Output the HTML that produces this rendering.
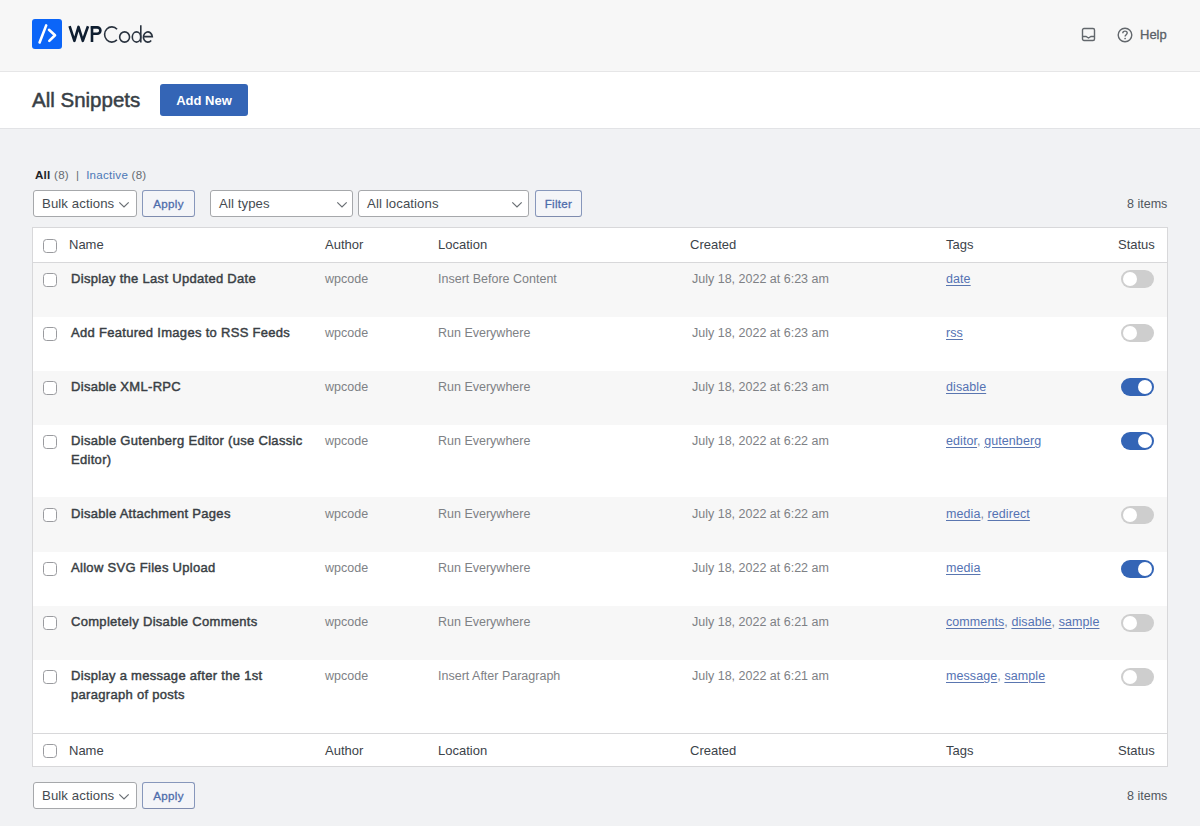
<!DOCTYPE html>
<html><head><meta charset="utf-8">
<style>
*{box-sizing:border-box;margin:0;padding:0}
html,body{width:1200px;height:826px;overflow:hidden}
body{background:#f1f2f4;font-family:"Liberation Sans",sans-serif;color:#3c434a;position:relative}
.abs{position:absolute}
#top{position:absolute;left:0;top:0;width:1200px;height:72px;background:#f7f7f7;border-bottom:1px solid #e6e6e7}
#band{position:absolute;left:0;top:72px;width:1200px;height:57px;background:#fff;border-bottom:1px solid #e2e3e6}
.logo{position:absolute;left:32px;top:19px;width:30px;height:30px;border-radius:3px;background:#0b65f8}
.wp{position:absolute;left:68px;top:21px;font-size:23px;line-height:26px;white-space:nowrap;color:#0f1f31}
.wp b{font-weight:700;display:inline-block;transform:scaleX(0.95);transform-origin:0 0;margin-right:-2px}
.wp span{color:#323c48;display:inline-block;transform:scaleX(0.89);transform-origin:0 0}
.help{position:absolute;left:1140px;top:27px;font-size:13px;line-height:16px;color:#5a6066;-webkit-text-stroke:0.3px #5a6066}
h1{position:absolute;left:32px;top:87px;font-size:20.5px;font-weight:400;line-height:26px;color:#383f46;white-space:nowrap;-webkit-text-stroke:0.5px #383f46}
.btnp{position:absolute;left:160px;top:84px;width:88px;height:32px;background:#3465b6;border-radius:3px;color:#fff;font-weight:700;font-size:13px;line-height:33px;text-align:center}
.sub{position:absolute;left:35px;top:168px;font-size:11.6px;letter-spacing:0.25px;line-height:14px;color:#666b71;white-space:nowrap}
.sub b{color:#1d2327}
.sub a{color:#4b77b6;text-decoration:none}
.sel{position:absolute;height:27px;background:#fff;border:1px solid #a6a8ab;border-radius:3px;font-size:13.2px;line-height:25px;padding-left:8px;color:#454b51;letter-spacing:0.1px;white-space:nowrap}
.sel svg{position:absolute;top:8px}
.btn2{position:absolute;height:27px;background:#f4f5f8;border:1px solid #8797bb;border-bottom-color:#7f8cae;border-radius:3px;font-size:11.6px;letter-spacing:0.3px;line-height:26px;text-align:center;color:#4d6cab;-webkit-text-stroke:0.3px #4d6cab}
.items{position:absolute;font-size:12.5px;line-height:14px;color:#50575e;white-space:nowrap}
#tbl{position:absolute;left:32px;top:227px;width:1136px;height:540px;background:#fff;border:1px solid #d8d8da}
.row{position:absolute;left:0;width:1134px}
.row.alt{background:#f7f7f7}
.cb{position:absolute;left:10px;width:14px;height:14px;border:1px solid #9a9b9f;border-radius:3.5px;background:#fff}
.th{position:absolute;font-size:13px;line-height:16px;color:#3c434a;white-space:nowrap}
.nm{position:absolute;left:38px;font-size:13px;font-weight:400;letter-spacing:0.3px;line-height:18.6px;color:#3a3f45;-webkit-text-stroke:0.45px #3a3f45;width:270px}
.td{position:absolute;font-size:12.5px;line-height:16px;color:#7e8185;white-space:nowrap}
.tg{position:absolute;left:913px;font-size:12.5px;letter-spacing:0.08px;line-height:16px;color:#7b86a0;white-space:nowrap}
.tg a{color:#5472b3;text-decoration:underline;text-underline-offset:1.5px;text-decoration-color:#5a76b0}
.tog{position:absolute;left:1088px;width:33px;height:18px;border-radius:9px;background:#cecece}
.tog::after{content:"";position:absolute;top:2px;left:2px;width:14px;height:14px;border-radius:50%;background:#fff}
.tog.on{background:#3465b6}
.tog.on::after{left:17px}
</style></head><body>
<div id="top">
  <div class="logo">
    <svg width="30" height="30" viewBox="0 0 30 30"><path d="M7.6 23.5 L14.2 6.4" stroke="#fff" stroke-width="2.6" stroke-linecap="round" fill="none"/><path d="M17 10.8 L23 16.3 L17.3 21.9" stroke="#fff" stroke-width="2.6" stroke-linecap="round" stroke-linejoin="round" fill="none"/></svg>
  </div>
  <svg class="abs" style="left:0;top:0" width="170" height="60" viewBox="0 0 170 60"><g fill="none" stroke="#0f1e30" stroke-width="2.6" stroke-linejoin="round"><path d="M69.6 26.2 L74.4 40.8 L78.5 26.9 L82.8 40.8 L88 26.2"/><path d="M92 26.2 V42"/><path d="M90.85 27.35 H97.2 A3.2 3.2 0 0 1 97.2 33.75 H92"/></g><g fill="none" stroke="#2a333f" stroke-width="1.6"><path d="M117.06 29.32 A7.2 7.6 0 1 0 116.9 39.87"/><ellipse cx="124.6" cy="37" rx="4.95" ry="5.1"/><ellipse cx="136.5" cy="37" rx="4.2" ry="5.1"/><path d="M140.8 25.3 V42.6"/><path d="M143.45 36.6 H152.3 A4.45 5.1 0 1 0 151.2 40.4"/></g></svg>
  <svg class="abs" style="left:1081px;top:27px" width="16" height="16" viewBox="0 0 16 16"><rect x="1.5" y="1.5" width="12" height="12" rx="1.5" fill="none" stroke="#62676c" stroke-width="1.4"/><path d="M1.5 9.5 H5 L7.5 11 L10 9.5 H13.5" fill="none" stroke="#62676c" stroke-width="1.4"/></svg>
  <svg class="abs" style="left:1117px;top:26.5px" width="16" height="16" viewBox="0 0 16 16"><circle cx="8" cy="8" r="6.8" fill="none" stroke="#62676c" stroke-width="1.4"/><path d="M5.8 6.2 C5.8 4.8 6.9 4.1 8 4.1 C9.2 4.1 10.2 4.9 10.2 6.1 C10.2 7.6 8.1 7.8 8.1 9.4" fill="none" stroke="#62676c" stroke-width="1.4"/><circle cx="8.1" cy="11.5" r="0.85" fill="#62676c"/></svg>
  <div class="help">Help</div>
</div>
<div id="band">
</div>
<h1>All Snippets</h1>
<div class="btnp">Add New</div>

<div class="sub"><b>All</b> (8) &nbsp;|&nbsp; <a>Inactive</a> (8)</div>

<div class="sel" style="left:33px;top:190px;width:104px">Bulk actions<svg style="left:84px;top:9px" width="12" height="9" viewBox="0 0 12 9"><path d="M1.3 2.3 L6 7 L10.7 2.3" fill="none" stroke="#6a6f74" stroke-width="1.2"/></svg></div>
<div class="btn2" style="left:142px;top:190px;width:53px">Apply</div>
<div class="sel" style="left:210px;top:190px;width:143px">All types<svg style="left:125px;top:9px" width="12" height="9" viewBox="0 0 12 9"><path d="M1.3 2.3 L6 7 L10.7 2.3" fill="none" stroke="#6a6f74" stroke-width="1.2"/></svg></div>
<div class="sel" style="left:358px;top:190px;width:171px">All locations<svg style="left:152px;top:9px" width="12" height="9" viewBox="0 0 12 9"><path d="M1.3 2.3 L6 7 L10.7 2.3" fill="none" stroke="#6a6f74" stroke-width="1.2"/></svg></div>
<div class="btn2" style="left:535px;top:190px;width:47px">Filter</div>
<div class="items" style="left:1127px;top:197px">8 items</div>

<div id="tbl">
<div class="row" style="top:0;height:35px;border-bottom:1px solid #d8d8da"><div class="cb" style="top:11px"></div><div class="th" style="left:36px;top:9px">Name</div><div class="th" style="left:292px;top:9px">Author</div><div class="th" style="left:405px;top:9px">Location</div><div class="th" style="left:657px;top:9px">Created</div><div class="th" style="left:913px;top:9px">Tags</div><div class="th" style="left:1085px;top:9px">Status</div></div>
<div class="row alt" style="top:35px;height:54px"><div class="cb" style="top:10px"></div><div class="nm" style="top:7px">Display the Last Updated Date</div><div class="td" style="left:292px;top:8px">wpcode</div><div class="td" style="left:405px;top:8px">Insert Before Content</div><div class="td" style="left:659px;top:8px">July 18, 2022 at 6:23 am</div><div class="tg" style="top:8px"><a>date</a></div><div class="tog" style="top:7px"></div></div>
<div class="row" style="top:89px;height:54px"><div class="cb" style="top:10px"></div><div class="nm" style="top:7px">Add Featured Images to RSS Feeds</div><div class="td" style="left:292px;top:8px">wpcode</div><div class="td" style="left:405px;top:8px">Run Everywhere</div><div class="td" style="left:659px;top:8px">July 18, 2022 at 6:23 am</div><div class="tg" style="top:8px"><a>rss</a></div><div class="tog" style="top:7px"></div></div>
<div class="row alt" style="top:143px;height:54px"><div class="cb" style="top:10px"></div><div class="nm" style="top:7px">Disable XML-RPC</div><div class="td" style="left:292px;top:8px">wpcode</div><div class="td" style="left:405px;top:8px">Run Everywhere</div><div class="td" style="left:659px;top:8px">July 18, 2022 at 6:23 am</div><div class="tg" style="top:8px"><a>disable</a></div><div class="tog on" style="top:7px"></div></div>
<div class="row" style="top:197px;height:72px"><div class="cb" style="top:10px"></div><div class="nm" style="top:7px">Disable Gutenberg Editor (use Classic<br>Editor)</div><div class="td" style="left:292px;top:8px">wpcode</div><div class="td" style="left:405px;top:8px">Run Everywhere</div><div class="td" style="left:659px;top:8px">July 18, 2022 at 6:22 am</div><div class="tg" style="top:8px"><a>editor</a>, <a>gutenberg</a></div><div class="tog on" style="top:7px"></div></div>
<div class="row alt" style="top:269px;height:55px"><div class="cb" style="top:11px"></div><div class="nm" style="top:8px">Disable Attachment Pages</div><div class="td" style="left:292px;top:9px">wpcode</div><div class="td" style="left:405px;top:9px">Run Everywhere</div><div class="td" style="left:659px;top:9px">July 18, 2022 at 6:22 am</div><div class="tg" style="top:9px"><a>media</a>, <a>redirect</a></div><div class="tog" style="top:9px"></div></div>
<div class="row" style="top:324px;height:54px"><div class="cb" style="top:10px"></div><div class="nm" style="top:7px">Allow SVG Files Upload</div><div class="td" style="left:292px;top:8px">wpcode</div><div class="td" style="left:405px;top:8px">Run Everywhere</div><div class="td" style="left:659px;top:8px">July 18, 2022 at 6:22 am</div><div class="tg" style="top:8px"><a>media</a></div><div class="tog on" style="top:8px"></div></div>
<div class="row alt" style="top:378px;height:54px"><div class="cb" style="top:10px"></div><div class="nm" style="top:7px">Completely Disable Comments</div><div class="td" style="left:292px;top:8px">wpcode</div><div class="td" style="left:405px;top:8px">Run Everywhere</div><div class="td" style="left:659px;top:8px">July 18, 2022 at 6:21 am</div><div class="tg" style="top:8px"><a>comments</a>, <a>disable</a>, <a>sample</a></div><div class="tog" style="top:8px"></div></div>
<div class="row" style="top:432px;height:73px"><div class="cb" style="top:10px"></div><div class="nm" style="top:7px">Display a message after the 1st<br>paragraph of posts</div><div class="td" style="left:292px;top:8px">wpcode</div><div class="td" style="left:405px;top:8px">Insert After Paragraph</div><div class="td" style="left:659px;top:8px">July 18, 2022 at 6:21 am</div><div class="tg" style="top:8px"><a>message</a>, <a>sample</a></div><div class="tog" style="top:8px"></div></div>
<div class="row" style="top:505px;height:33px;border-top:1px solid #d8d8da"><div class="cb" style="top:10px"></div><div class="th" style="left:36px;top:9px">Name</div><div class="th" style="left:292px;top:9px">Author</div><div class="th" style="left:405px;top:9px">Location</div><div class="th" style="left:657px;top:9px">Created</div><div class="th" style="left:913px;top:9px">Tags</div><div class="th" style="left:1085px;top:9px">Status</div></div>
</div><!--/tbl-->

<div class="sel" style="left:33px;top:782px;width:104px">Bulk actions<svg style="left:84px;top:9px" width="12" height="9" viewBox="0 0 12 9"><path d="M1.3 2.3 L6 7 L10.7 2.3" fill="none" stroke="#6a6f74" stroke-width="1.2"/></svg></div>
<div class="btn2" style="left:142px;top:782px;width:53px">Apply</div>
<div class="items" style="left:1127px;top:789px">8 items</div>
</body></html>
